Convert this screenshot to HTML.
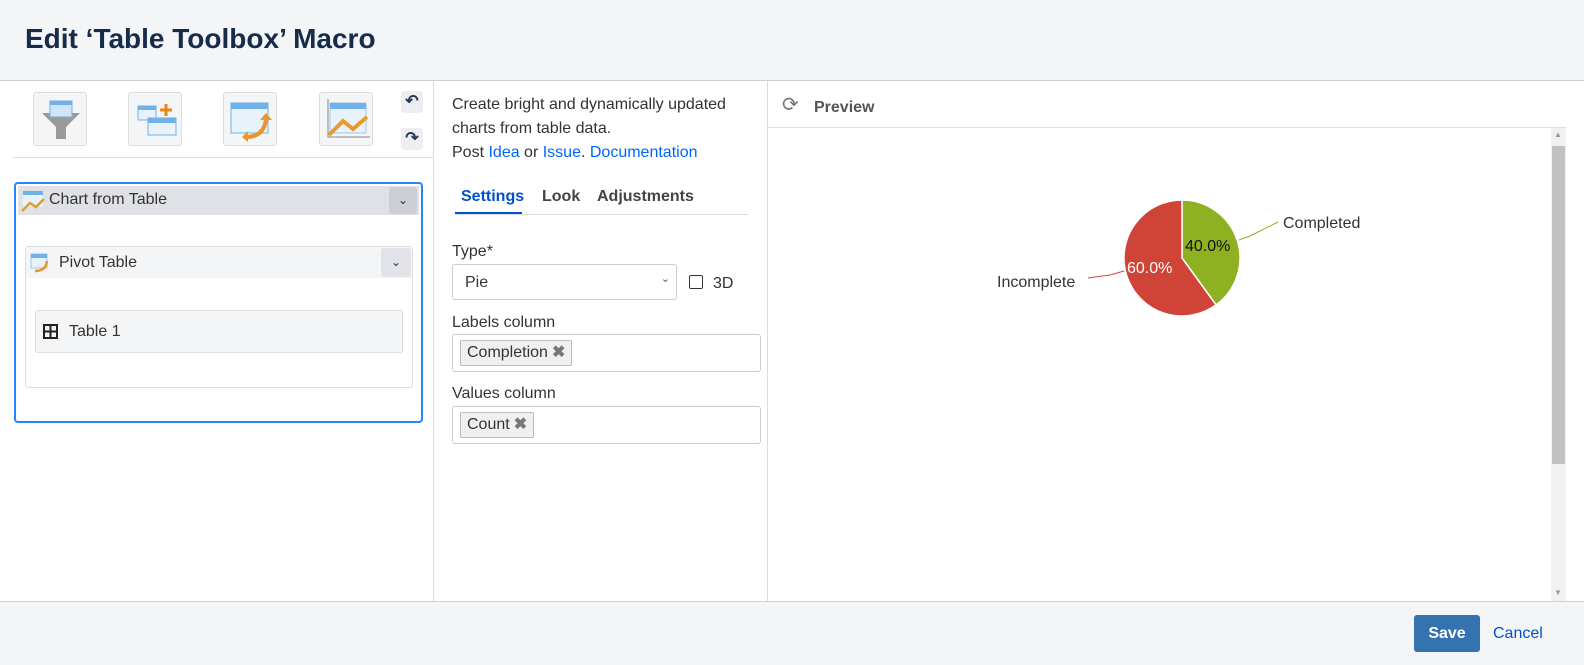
<!DOCTYPE html>
<html><head><style>
*{box-sizing:border-box;margin:0;padding:0}
body{width:1584px;height:665px;overflow:hidden;font-family:"Liberation Sans",sans-serif;background:#fff;color:#172b4d;position:relative;font-size:16px}
.hdr{position:absolute;left:0;top:0;width:1584px;height:81px;background:#f4f5f7;border-bottom:1px solid #d0d0d0}
.hdr h1{position:absolute;left:25px;top:23px;font-size:28px;font-weight:bold;color:#172b4d}
.ftr{position:absolute;left:0;top:601px;width:1584px;height:64px;background:#f4f5f7;border-top:1px solid #d0d0d0}
.save{position:absolute;left:1414px;top:615px;width:66px;height:37px;background:#3572b0;color:#fff;font-weight:bold;border-radius:3px;text-align:center;line-height:37px;font-size:16px}
.cancel{position:absolute;left:1493px;top:625px;color:#0052cc;font-size:16px}
.vl{position:absolute;top:81px;height:520px;width:1px;background:#ddd}
.tb{position:absolute;top:92px;width:54px;height:54px;background:#f4f5f7;border:1px solid #ddd;border-radius:3px}
.ud{position:absolute;left:401px;width:22px;height:22px;background:#eceef1;border-radius:3px;font-size:16px;text-align:center;line-height:22px;color:#253858;font-weight:bold}
.txt{position:absolute;font-size:16px;color:#333}
a{color:#0065ff;text-decoration:none}
.inp{position:absolute;border:1px solid #ccc;border-radius:3px;background:#fff}
.tag{position:absolute;top:5px;left:7px;height:26px;background:#f0f0f0;border:1px solid #bbb;border-radius:2px;padding:0 6px;line-height:24px;font-size:16px;color:#333}
.tag b{color:#777;margin-left:4px}
</style></head><body>
<div class="hdr"><h1>Edit ‘Table Toolbox’ Macro</h1></div>
<div class="vl" style="left:433px"></div>
<div class="vl" style="left:767px"></div>

<div class="tb" style="left:33px"><svg width="54" height="54"><path d="M8 20h38l-14 14v12h-10v-12z" fill="#9a9a9a"/><rect x="16" y="8" width="22" height="16" fill="#cfe4f7" stroke="#6fb1e8"/><rect x="16" y="8" width="22" height="4" fill="#6fb1e8"/></svg></div>
<div class="tb" style="left:128px"><svg width="54" height="54"><rect x="9" y="13" width="18" height="14" fill="#e8f2fb" stroke="#6fb1e8"/><rect x="9" y="13" width="18" height="4" fill="#6fb1e8"/><rect x="19" y="25" width="28" height="17" fill="#e8f2fb" stroke="#6fb1e8"/><rect x="19" y="25" width="28" height="5" fill="#6fb1e8"/><path d="M37 11v12M31 17h12" stroke="#e8841a" stroke-width="3"/></svg></div>
<div class="tb" style="left:223px"><svg width="54" height="54"><rect x="7" y="10" width="37" height="30" fill="#e8f2fb" stroke="#6fb1e8"/><rect x="7" y="10" width="37" height="6" fill="#6fb1e8"/><path d="M22 44q18 0 20-18" stroke="#e8962a" stroke-width="4" fill="none"/><path d="M36 27l6-7 6 7z M24 38l-6 6 6 5z" fill="#e8962a"/></svg></div>
<div class="tb" style="left:319px"><svg width="54" height="54"><rect x="10" y="10" width="36" height="30" fill="#e8f2fb" stroke="#9cc8ee"/><rect x="10" y="10" width="36" height="6" fill="#6fb1e8"/><path d="M8 6v38h42" stroke="#888" fill="none"/><path d="M9 42l14-14 10 8 14-12" stroke="#ea9a2a" stroke-width="4" fill="none"/></svg></div>
<div class="ud" style="top:91px">↶</div>
<div class="ud" style="top:128px">↷</div>
<div style="position:absolute;left:13px;top:157px;width:420px;height:1px;background:#ddd"></div>

<div style="position:absolute;left:14px;top:182px;width:409px;height:241px;border:2px solid #2684ff;border-radius:4px">
 <div style="position:absolute;left:2px;top:2px;width:401px;height:29px;background:#dfe1e6">
  <svg style="position:absolute;left:2px;top:3px" width="26" height="24"><rect x="3" y="2" width="20" height="16" fill="#e8f2fb"/><rect x="3" y="2" width="20" height="4" fill="#6fb1e8"/><path d="M2 22l8-8 6 4 8-8" stroke="#ea9a2a" stroke-width="2.5" fill="none"/></svg>
  <span style="position:absolute;left:31px;top:5px;font-size:16px;color:#333">Chart from Table</span>
  <div style="position:absolute;right:2px;top:1px;width:28px;height:27px;background:#ccced4;border-radius:3px;text-align:center;line-height:27px;font-size:12px;color:#333">⌄</div>
 </div>
 <div style="position:absolute;left:9px;top:62px;width:388px;height:142px;border:1px solid #ddd;border-radius:3px">
  <div style="position:absolute;left:0;top:0;width:386px;height:31px;background:#f4f5f7">
   <svg style="position:absolute;left:3px;top:5px" width="22" height="22"><rect x="2" y="2" width="16" height="14" fill="#e8f2fb" stroke="#9cc8ee"/><rect x="2" y="2" width="16" height="4" fill="#6fb1e8"/><path d="M6 19q11 0 12-10" stroke="#e8962a" stroke-width="2.5" fill="none"/></svg>
   <span style="position:absolute;left:33px;top:7px;font-size:16px;color:#333">Pivot Table</span>
   <div style="position:absolute;right:1px;top:1px;width:30px;height:29px;background:#e1e3e8;border-radius:3px;text-align:center;line-height:29px;font-size:12px;color:#333">⌄</div>
  </div>
  <div style="position:absolute;left:9px;top:63px;width:368px;height:43px;background:#f4f5f7;border:1px solid #ddd;border-radius:3px">
   <svg style="position:absolute;left:7px;top:13px" width="15" height="15"><rect x="1" y="1" width="13" height="13" fill="none" stroke="#222" stroke-width="2"/><path d="M7.5 1v13M1 7.5h13" stroke="#222" stroke-width="2"/></svg>
   <span style="position:absolute;left:33px;top:12px;font-size:16px;color:#333">Table 1</span>
  </div>
 </div>
</div>

<div class="txt" style="left:452px;top:93px;line-height:24px;width:310px">Create bright and dynamically updated charts from table data.<br>Post <a>Idea</a> or <a>Issue</a>. <a>Documentation</a></div>
<div class="txt" style="left:461px;top:188px;color:#0052cc;font-weight:bold">Settings</div>
<div style="position:absolute;left:455px;top:212px;width:67px;height:3px;background:#0052cc"></div>
<div style="position:absolute;left:455px;top:214px;width:293px;height:1px;background:#ddd"></div>
<div class="txt" style="left:542px;top:188px;font-weight:bold;color:#444">Look</div>
<div class="txt" style="left:597px;top:188px;font-weight:bold;color:#444">Adjustments</div>
<div class="txt" style="left:452px;top:243px">Type*</div>
<div class="inp" style="left:452px;top:264px;width:225px;height:36px"><span style="position:absolute;left:12px;top:9px;color:#333">Pie</span><span style="position:absolute;right:6px;top:7px;font-size:11px;color:#555">⌄</span></div>
<div style="position:absolute;left:689px;top:275px;width:14px;height:14px;border:1.5px solid #333;border-radius:2px"></div>
<div class="txt" style="left:713px;top:275px">3D</div>
<div class="txt" style="left:452px;top:314px">Labels column</div>
<div class="inp" style="left:452px;top:334px;width:309px;height:38px"><div class="tag">Completion<b>✖</b></div></div>
<div class="txt" style="left:452px;top:385px">Values column</div>
<div class="inp" style="left:452px;top:406px;width:309px;height:38px"><div class="tag">Count<b>✖</b></div></div>

<div style="position:absolute;left:768px;top:82px;width:798px;height:46px;border-bottom:1px solid #ddd">
 <span style="position:absolute;left:14px;top:10px;font-size:20px;color:#777">⟳</span>
 <span style="position:absolute;left:46px;top:17px;font-weight:bold;color:#555;font-size:16px">Preview</span>
</div>
<div style="position:absolute;left:1551px;top:128px;width:15px;height:473px;background:#f1f1f1"></div>
<div style="position:absolute;left:1552px;top:146px;width:13px;height:318px;background:#c1c1c1"></div>
<div style="position:absolute;left:1554px;top:130px;font-size:8px;color:#999">▲</div>
<div style="position:absolute;left:1554px;top:588px;font-size:8px;color:#999">▼</div>

<svg style="position:absolute;left:768px;top:128px" width="783" height="473" font-family="Liberation Sans, sans-serif">
 <g transform="translate(414,130)">
  <path d="M0 0V-58A58 58 0 0 1 34.1 46.9Z" fill="#8fb021" stroke="#fff" stroke-width="1.5"/>
  <path d="M0 0L34.1 46.9A58 58 0 1 1 0 -58Z" fill="#d04437" stroke="#fff" stroke-width="1.5"/>
  <text x="3" y="-7" font-size="16" fill="#111">40.0%</text>
  <text x="-55" y="15" font-size="16" fill="#fff">60.0%</text>
  <path d="M57 -18L68 -22L96 -36" stroke="#8fb021" fill="none"/>
  <path d="M-58 13L-72 17L-94 20" stroke="#d04437" fill="none"/>
  <text x="101" y="-30" font-size="16" fill="#333">Completed</text>
  <text x="-185" y="29" font-size="16" fill="#333">Incomplete</text>
 </g>
</svg>

<div class="ftr"></div>
<div class="save">Save</div>
<div class="cancel">Cancel</div>
</body></html>
